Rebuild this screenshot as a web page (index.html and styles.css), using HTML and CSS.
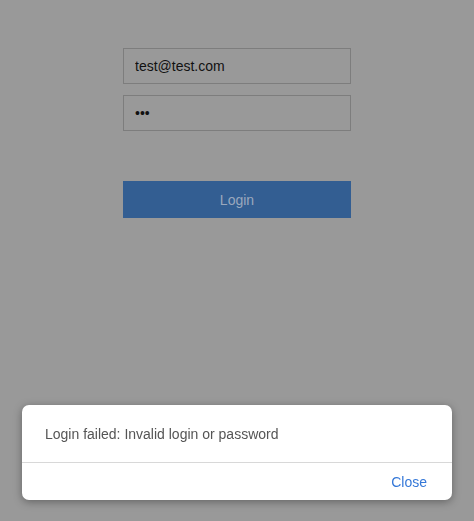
FILE: index.html
```html
<!DOCTYPE html>
<html>
<head>
<meta charset="utf-8">
<link rel="stylesheet" href="styles.css">
</head>
<body>
<div class="page">
  <form class="login">
    <input class="field" type="text" value="test@test.com">
    <input class="field" type="password" value="abc">
    <button class="btn" type="button">Login</button>
  </form>
</div>
<div class="dialog">
  <div class="dialog-body">Login failed: Invalid login or password</div>
  <div class="dialog-footer"><span class="close">Close</span></div>
</div>
</body>
</html>
```
FILE: styles.css
```css
html, body {
  margin: 0;
  padding: 0;
  height: 100%;
  background: #999999;
  font-family: "Liberation Sans", Arial, sans-serif;
}
.page {
  display: flex;
  justify-content: center;
  padding-top: 48px;
}
.login {
  width: 228px;
  display: flex;
  flex-direction: column;
}
.field {
  box-sizing: border-box;
  height: 36px;
  margin: 0 0 11px 0;
  padding: 0 11px;
  border: 1px solid #7d7d7d;
  background: #999999;
  color: #111;
  font-family: "Liberation Sans", Arial, sans-serif;
  font-size: 14px;
  outline: none;
}
.btn {
  margin-top: 39px;
  height: 37px;
  border: none;
  background: #335e92;
  color: #9aa8bd;
  font-family: "Liberation Sans", Arial, sans-serif;
  font-size: 14px;
}
.dialog {
  position: fixed;
  left: 22px;
  right: 22px;
  bottom: 21px;
  background: #fff;
  border-radius: 7px;
  box-shadow: 0 2px 8px rgba(0,0,0,0.35);
  display: flex;
  flex-direction: column;
}
.dialog-body {
  height: 58px;
  box-sizing: border-box;
  padding: 0 23px;
  display: flex;
  align-items: center;
  font-size: 14px;
  color: #555;
  border-bottom: 1px solid #d8d8d8;
}
.dialog-footer {
  height: 37px;
  display: flex;
  align-items: center;
  justify-content: flex-end;
  padding: 0 25px;
}
.close {
  color: #3578d8;
  font-size: 14px;
}
```
